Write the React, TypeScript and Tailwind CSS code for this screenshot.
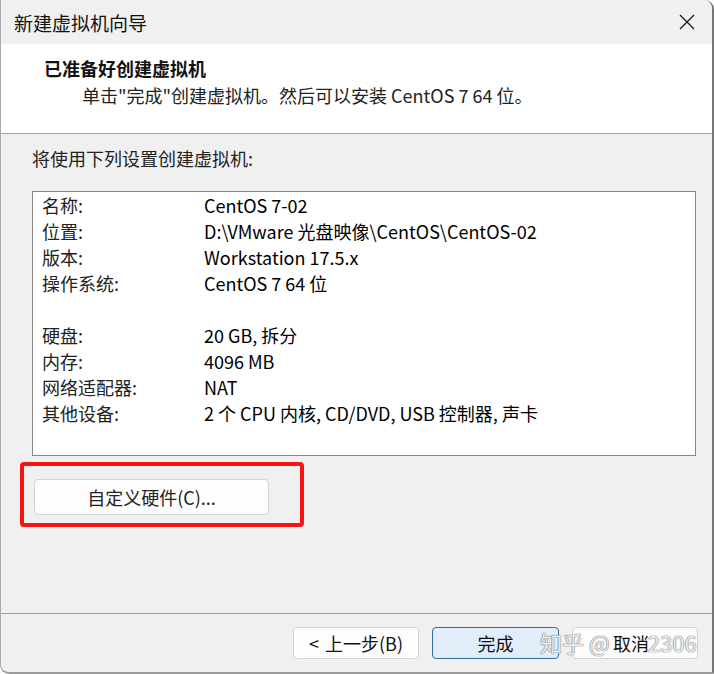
import React from "react";

const FONT = { fontFamily: '"Noto Sans CJK SC", "Noto Sans", sans-serif' };

const rows: [string, string][] = [
  ["名称:", "CentOS 7-02"],
  ["位置:", "D:\\VMware 光盘映像\\CentOS\\CentOS-02"],
  ["版本:", "Workstation 17.5.x"],
  ["操作系统:", "CentOS 7 64 位"],
  ["", ""],
  ["硬盘:", "20 GB, 拆分"],
  ["内存:", "4096 MB"],
  ["网络适配器:", "NAT"],
  ["其他设备:", "2 个 CPU 内核, CD/DVD, USB 控制器, 声卡"],
];

function CloseIcon() {
  return (
    <svg width="18" height="18" viewBox="0 0 18 18" fill="none">
      <path d="M2 2 L16 16 M16 2 L2 16" stroke="#1a1a1a" strokeWidth="1.3" />
    </svg>
  );
}

export default function App() {
  return (
    <div className="w-[714px] h-[674px] bg-white text-[#111]" style={FONT}>
      <div className="relative w-full h-full flex flex-col bg-[#f0f0f0] border-l border-[#a9a9a9] border-r-2 border-r-[#777] border-b-2 border-b-[#9c9c9c] rounded-tr-[9px] rounded-bl-[9px] overflow-hidden">
        {/* title bar */}
        <div className="h-[44px] flex items-center justify-between pl-[13px] pr-[16px] bg-[#f0f0f0]">
          <span className="text-[19px] leading-none">新建虚拟机向导</span>
          <CloseIcon />
        </div>

        {/* header */}
        <div className="h-[90px] bg-white border-b border-[#a0a0a0] flex flex-col pl-[43px] pt-[13px]">
          <div className="text-[18px] leading-[22px] font-bold">已准备好创建虚拟机</div>
          <div className="text-[18px] leading-[24px] pl-[38px] mt-[4px] text-[#222] whitespace-nowrap">
            单击"完成"创建虚拟机。然后可以安装 CentOS 7 64 位。
          </div>
        </div>

        {/* body */}
        <div className="h-[479px] flex flex-col pl-[31px] pt-[12px]">
          <div className="text-[18px] leading-[24px] text-[#222]">将使用下列设置创建虚拟机:</div>
          <div className="mt-[21px] w-[664px] h-[265px] bg-white border border-[#858585] pl-[9px]">
            {rows.map(([k, v], i) => (
              <div key={i} className="flex h-[26px] items-center text-[18px] leading-[26px]">
                <span className="w-[162px] text-[#222]">{k}</span>
                <span className="text-black">{v}</span>
              </div>
            ))}
          </div>
          <div className="mt-[6px] -ml-[12px] w-[284px] h-[65px] border-4 border-[#fb1313] rounded-[4px] pl-[10px] pt-[13px]">
            <button className="w-[235px] h-[36px] bg-[#fdfdfd] border border-[#d3d3d3] rounded-[4px] text-[18px] text-[#222] flex items-center justify-center">
              自定义硬件(C)...
            </button>
          </div>
        </div>

        {/* footer */}
        <div className="flex-1 border-t border-[#a0a0a0] flex justify-end items-start pt-[13px] pr-[14px] gap-[13px]">
          <button className="w-[126px] h-[32px] bg-[#fdfdfd] border border-[#d3d3d3] rounded-[4px] text-[18px] flex items-center justify-center gap-[6px]">
            <span>&lt;</span>
            <span>上一步(B)</span>
          </button>
          <button className="w-[127px] h-[32px] bg-[#e1eefa] border border-[#2f6ea5] rounded-[4px] text-[18px] flex items-center justify-center">
            完成
          </button>
          <button className="w-[126px] h-[32px] bg-[#fdfdfd] border border-[#d3d3d3] rounded-[4px] text-[18px] flex items-center justify-center pr-[8px]">
            取消
          </button>
        </div>

        {/* watermark */}
        <div
          className="absolute left-[539px] top-[628px] flex items-center whitespace-nowrap text-[22px] leading-[28px] text-white/90 pointer-events-none"
          style={{ textShadow: "0 0 1px #555, 0 0 1px #555" }}
        >
          <span>知乎 @</span>
          <span className="w-[38px] shrink-0" />
          <span>2306</span>
        </div>
      </div>
    </div>
  );
}
